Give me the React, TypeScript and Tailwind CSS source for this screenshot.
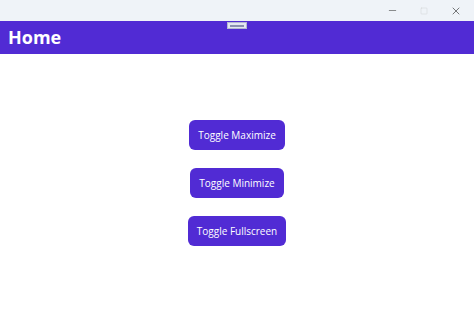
import React from "react";
import { Minus, Square, X } from "lucide-react";

const buttons = ["Toggle Maximize", "Toggle Minimize", "Toggle Fullscreen"];

const App = () => {
  return (
    <div className="w-[474px] h-[312px] flex flex-col bg-white font-['Open_Sans',sans-serif] overflow-hidden">
      {/* title bar */}
      <div className="h-[21px] bg-[#eff3f8] flex justify-end items-center">
        <div className="w-[32px] flex justify-center text-[#333]">
          <Minus size={11} strokeWidth={1.2} />
        </div>
        <div className="w-[32px] flex justify-center text-[#c4c4c4]">
          <Square size={8} strokeWidth={1} />
        </div>
        <div className="w-[32px] flex justify-center text-[#222] mr-[2px]">
          <X size={12} strokeWidth={1.2} />
        </div>
      </div>
      {/* nav bar */}
      <div className="relative h-[33px] bg-[#512bd4] flex items-center px-2">
        <div className="text-white text-[18px] font-bold leading-none pb-[1px]">Home</div>
        {/* drag handle */}
        <div className="absolute left-[227px] top-[1px] w-[20px] h-[7px] bg-[#e4e6f2] border border-[#b4b8d0] flex items-center justify-center">
          <div className="w-[14px] h-[2px] bg-[#8a8fb0]" />
        </div>
      </div>
      {/* content */}
      <div className="flex-1 flex flex-col items-center justify-center gap-[18px] pb-[1px]">
        {buttons.map((b) => (
          <button
            key={b}
            className="h-[30px] px-[9px] rounded-[6px] bg-[#512bd4] text-white text-[10px] font-medium leading-none"
          >
            {b}
          </button>
        ))}
      </div>
    </div>
  );
};

export default App;
